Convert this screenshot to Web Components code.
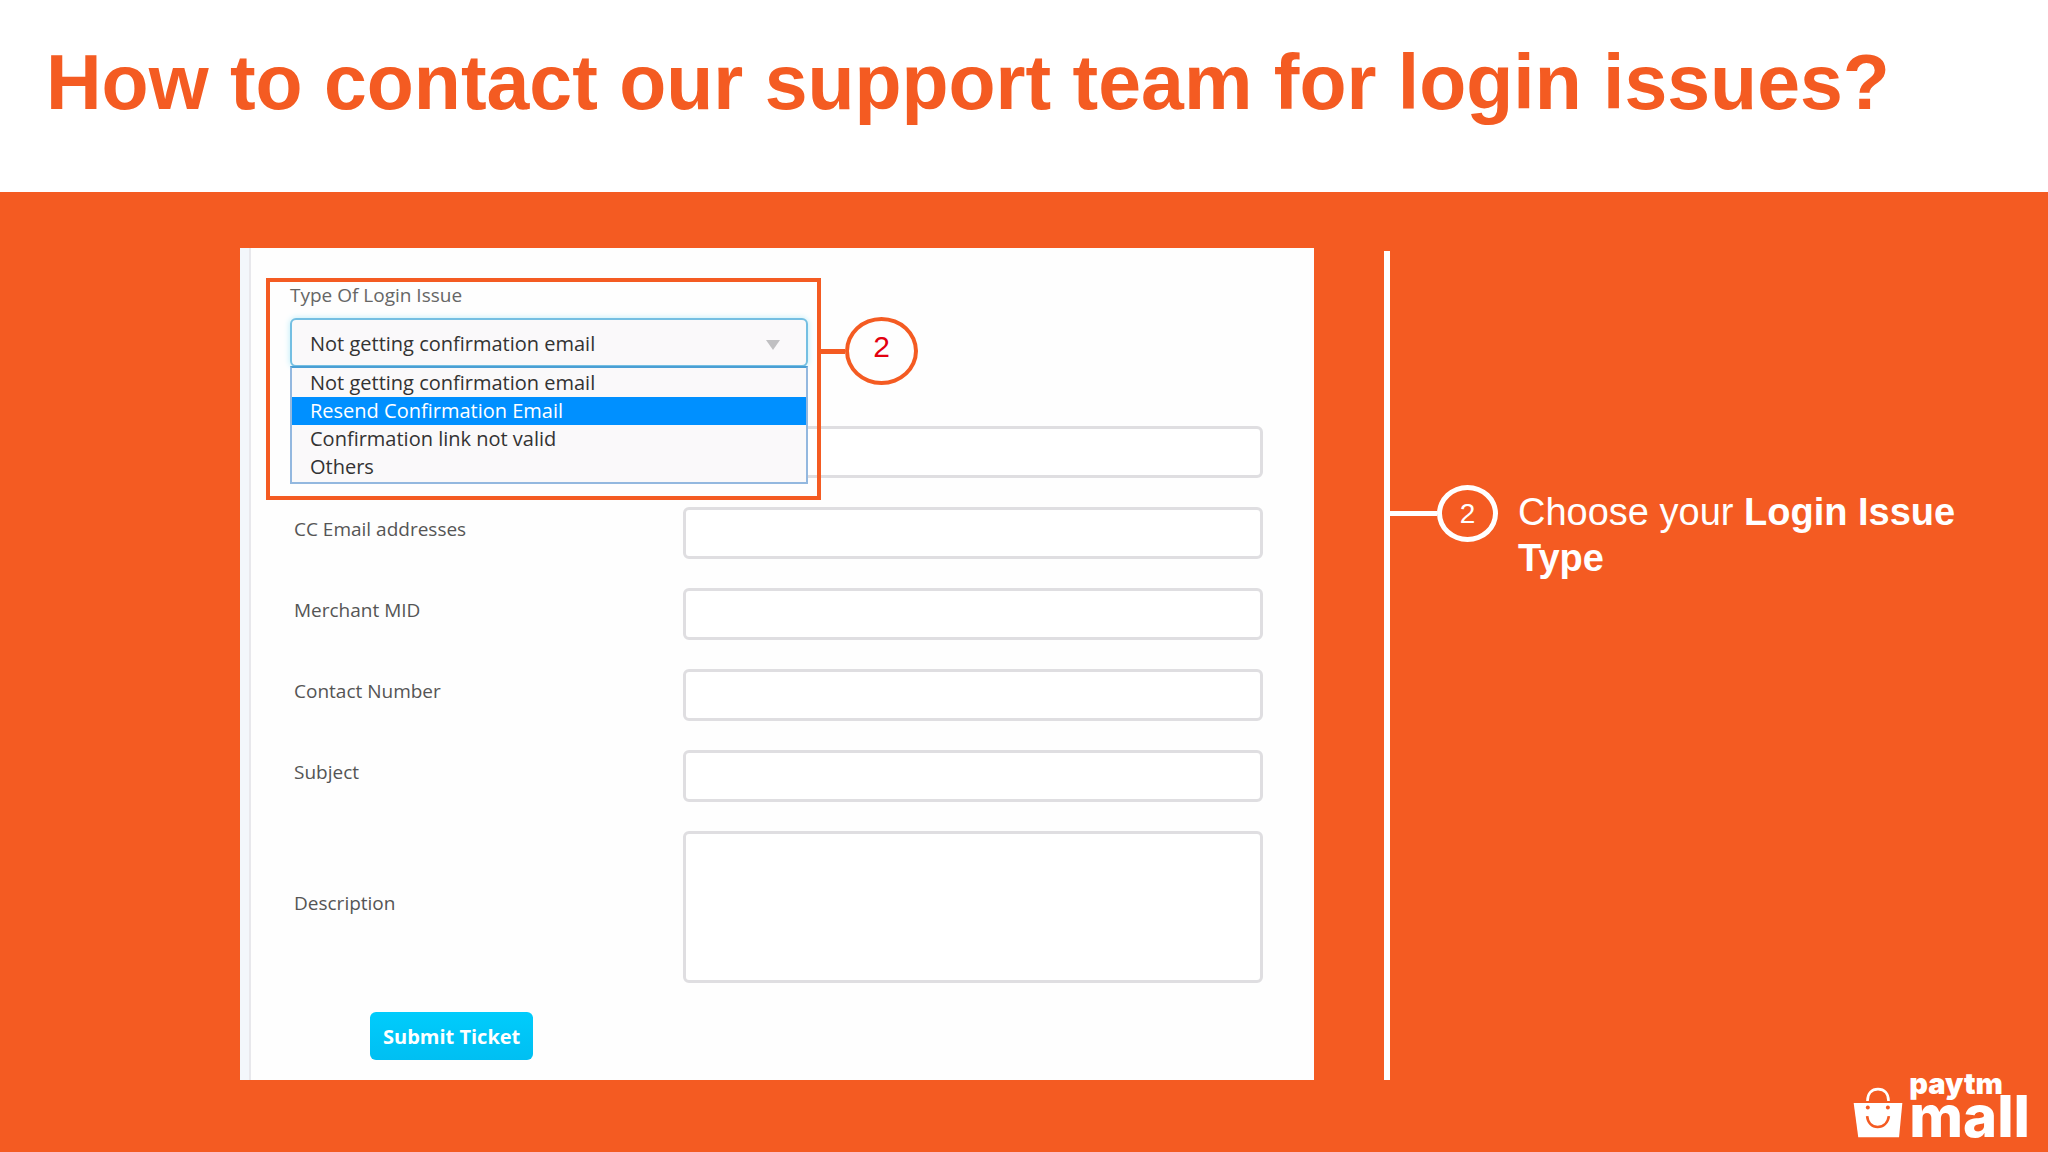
<!DOCTYPE html>
<html lang="en">
<head>
<meta charset="utf-8">
<title>How to contact our support team for login issues?</title>
<style>
    body {
        margin: 0;
        font-family: "Liberation Sans", Arial, sans-serif;
    }
</style>
</head>
<body>
<help-slide>
    <span slot="title">How to contact our support team for login issues?</span>
    <ticket-form slot="form"></ticket-form>
    <step-note slot="step" number="2">Choose your <b>Login Issue</b> <b>Type</b></step-note>
    <mall-logo slot="logo"></mall-logo>
</help-slide>

<template id="help-slide">
<style>
    :host {
        --brand: #f45b22;
        display: flex;
        flex-direction: column;
        min-height: 100vh;
        background: var(--brand);
    }

    header {
        box-sizing: border-box;
        min-height: 192px;
        padding: 38px 46px;
        background: #fff;
    }

    h1 {
        margin: 0;
        color: var(--brand);
        font-size: 77px;
        line-height: 88px;
    }

    main {
        flex: 1;
        display: grid;
        grid-template-columns: minmax(0, 1144fr) 6px minmax(0, 640fr);
        padding: 56px 18px 14px 240px;
    }

    .form {
        display: grid;
        margin: 0 70px 58px 0;
    }

    .rule {
        margin: 3px 0 58px;
        background: #fff;
    }

    .side {
        display: flex;
        flex-direction: column;
        justify-content: space-between;
        padding-top: 237px;
    }

    ::slotted(mall-logo) {
        align-self: flex-end;
    }
</style>
<header>
    <h1><slot name="title"></slot></h1>
</header>
<main>
    <div class="form"><slot name="form"></slot></div>
    <div class="rule"></div>
    <div class="side">
        <slot name="step"></slot>
        <slot name="logo"></slot>
    </div>
</main>
</template>

<template id="step-badge">
<style>
    :host {
        display: flex;
        align-items: center;
        color: #fff;
        font-family: "Liberation Sans", Arial, sans-serif;
    }

    .line {
        width: var(--line, 47px);
        height: 5px;
        background: currentColor;
    }

    .circle {
        box-sizing: border-box;
        display: flex;
        align-items: center;
        justify-content: center;
        width: var(--w, 61px);
        height: var(--h, 57px);
        padding-bottom: var(--lift, 0);
        border: var(--stroke, 5px) solid currentColor;
        border-radius: 50%;
    }

    .number {
        color: var(--number, currentColor);
        font-size: var(--size, 28px);
        line-height: 32px;
    }
</style>
<div class="line"></div>
<div class="circle"><span class="number"><slot></slot></span></div>
</template>

<template id="step-note">
<style>
    :host {
        display: flex;
        align-items: flex-start;
        gap: 20px;
        color: #fff;
    }

    step-badge {
        flex: none;
    }

    p {
        margin: 4px 48px 0 0;
        font-size: 38px;
        line-height: 46px;
    }
</style>
<step-badge id="badge"></step-badge>
<p><slot></slot></p>
</template>

<template id="issue-select">
<style>
    :host {
        display: block;
        position: relative;
        width: 518px;
        font-size: 20px;
    }

    .frame {
        position: absolute;
        z-index: 2;
        inset: -4px -13px -133px -24px;
        border: 4px solid var(--brand);
        pointer-events: none;
    }

    step-badge {
        position: absolute;
        z-index: 2;
        top: 35px;
        left: 531px;
        color: var(--brand);
        --line: 24px;
        --w: 73px;
        --h: 68px;
        --lift: 8px;
        --stroke: 4px;
        --number: #e3000f;
        --size: 30px;
    }

    label {
        display: block;
        height: 36px;
        color: #666;
        font-size: 19px;
        line-height: 26px;
    }

    .box {
        position: relative;
    }

    select {
        appearance: none;
        box-sizing: border-box;
        display: block;
        width: 100%;
        height: 49px;
        padding: 2px 18px 0;
        border: 2px solid #74bfe2;
        border-radius: 6px;
        background: #faf9fa;
        box-shadow: 0 0 6px #b9ecf8;
        color: #333;
        font: inherit;
    }

    .arrow {
        position: absolute;
        top: 22px;
        right: 28px;
        width: 14px;
        height: 10px;
        fill: #c0c0c2;
    }

    ul {
        position: absolute;
        z-index: 1;
        top: 48px;
        left: 0;
        right: 0;
        margin: 0;
        padding: 1px 0;
        border: 2px solid #93b8df;
        border-top-color: #4a9fd4;
        background: #faf9fa;
        color: #333;
        list-style: none;
    }

    li {
        padding: 0 18px;
        line-height: 28px;
    }

    li[aria-selected="true"] {
        background: #0090ff;
        color: #fff;
    }
</style>
<label for="issue">Type Of Login Issue</label>
<div class="box">
    <select id="issue">
        <option>Not getting confirmation email</option>
    </select>
    <svg class="arrow" viewBox="0 0 14 10"><path d="M0 0h14L7 10z"/></svg>
    <ul role="listbox" aria-label="Type Of Login Issue">
        <li role="option">Not getting confirmation email</li>
        <li role="option" aria-selected="true">Resend Confirmation Email</li>
        <li role="option">Confirmation link not valid</li>
        <li role="option">Others</li>
    </ul>
</div>
<div class="frame"></div>
<step-badge>2</step-badge>
</template>

<template id="form-field">
<style>
    :host {
        display: grid;
        grid-template-columns: minmax(0, 389fr) minmax(0, 579fr);
        align-items: center;
    }

    label {
        padding-bottom: 8px;
        color: #555;
        font-size: 19px;
        line-height: 28px;
    }

    input,
    textarea {
        box-sizing: border-box;
        display: block;
        grid-column: 2;
        width: 100%;
        height: 52px;
        margin: 0;
        padding: 8px 16px;
        border: 3px solid #dfdee1;
        border-radius: 6px;
        background: #fff;
        font: inherit;
        font-size: 20px;
        resize: none;
    }

    textarea {
        height: 152px;
    }
</style>
</template>

<template id="ticket-form">
<style>
    :host {
        display: block;
        border-left: 9px solid #f3f7fb;
        background: #fefefe;
        font-family: "Open Sans", sans-serif;
    }

    form {
        box-sizing: border-box;
        min-height: 100%;
        padding: 34px 51px 20px 39px;
        border-left: 2px solid #e8e8ec;
    }

    .fields {
        display: grid;
        gap: 29px;
        margin: 59px 0 29px 4px;
    }

    button {
        display: block;
        margin-left: 80px;
        height: 48px;
        padding: 0 13px;
        border: 0;
        border-radius: 6px;
        background: linear-gradient(#00ccfc, #00bff2);
        color: #fff;
        font: 700 20px "Open Sans", sans-serif;
    }
</style>
<form>
    <issue-select></issue-select>
    <div class="fields">
        <form-field></form-field>
        <form-field label="CC Email addresses"></form-field>
        <form-field label="Merchant MID"></form-field>
        <form-field label="Contact Number"></form-field>
        <form-field label="Subject"></form-field>
        <form-field label="Description" multiline></form-field>
    </div>
    <button type="button">Submit Ticket</button>
</form>
</template>

<template id="mall-logo">
<style>
    :host {
        display: flex;
        align-items: flex-end;
        gap: 6px;
        color: #fff;
        font-family: Inter, sans-serif;
    }

    .name {
        display: grid;
    }

    .top {
        font-size: 29px;
        font-weight: 900;
        line-height: 20px;
    }

    .bottom {
        font-size: 58px;
        font-weight: 800;
        line-height: 44px;
    }
</style>
<svg width="50" height="51" viewBox="38 78 152 154" fill="none">
    <path d="M40 126H188L178 230H54Z" fill="#fff"/>
    <path d="M82 120C82 96 95 84 114 84S146 96 146 120" stroke="#fff" stroke-width="8"/>
    <g fill="#f45b22">
        <circle cx="83" cy="140" r="6"/>
        <circle cx="144" cy="140" r="6"/>
    </g>
    <path d="M81 166C83 187 96 199 113 199S144 187 147 166" stroke="#f45b22" stroke-width="8"/>
</svg>
<div class="name">
    <span class="top">paytm</span>
    <span class="bottom">mall</span>
</div>
</template>

<script>
class BaseElement extends HTMLElement {
    constructor () {
        super()
        this._shadowRoot = this.attachShadow({ mode: 'open' })
        const template = document.getElementById(this.localName)
        this._shadowRoot.appendChild(template.content.cloneNode(true))
    }
}

class StepNote extends BaseElement {
    connectedCallback () {
        this._shadowRoot.getElementById('badge').textContent = this.getAttribute('number')
    }
}

class FormField extends BaseElement {
    connectedCallback () {
        const text = this.getAttribute('label')
        const control = document.createElement(this.hasAttribute('multiline') ? 'textarea' : 'input')
        control.id = 'control'
        if (text) {
            const label = document.createElement('label')
            label.htmlFor = 'control'
            label.textContent = text
            this._shadowRoot.appendChild(label)
        } else {
            control.setAttribute('aria-label', 'Email address')
        }
        this._shadowRoot.appendChild(control)
    }
}

customElements.define('step-badge', class extends BaseElement {});
customElements.define('step-note', StepNote);
customElements.define('issue-select', class extends BaseElement {});
customElements.define('form-field', FormField);
customElements.define('ticket-form', class extends BaseElement {});
customElements.define('mall-logo', class extends BaseElement {});
customElements.define('help-slide', class extends BaseElement {});
</script>
</body>
</html>
